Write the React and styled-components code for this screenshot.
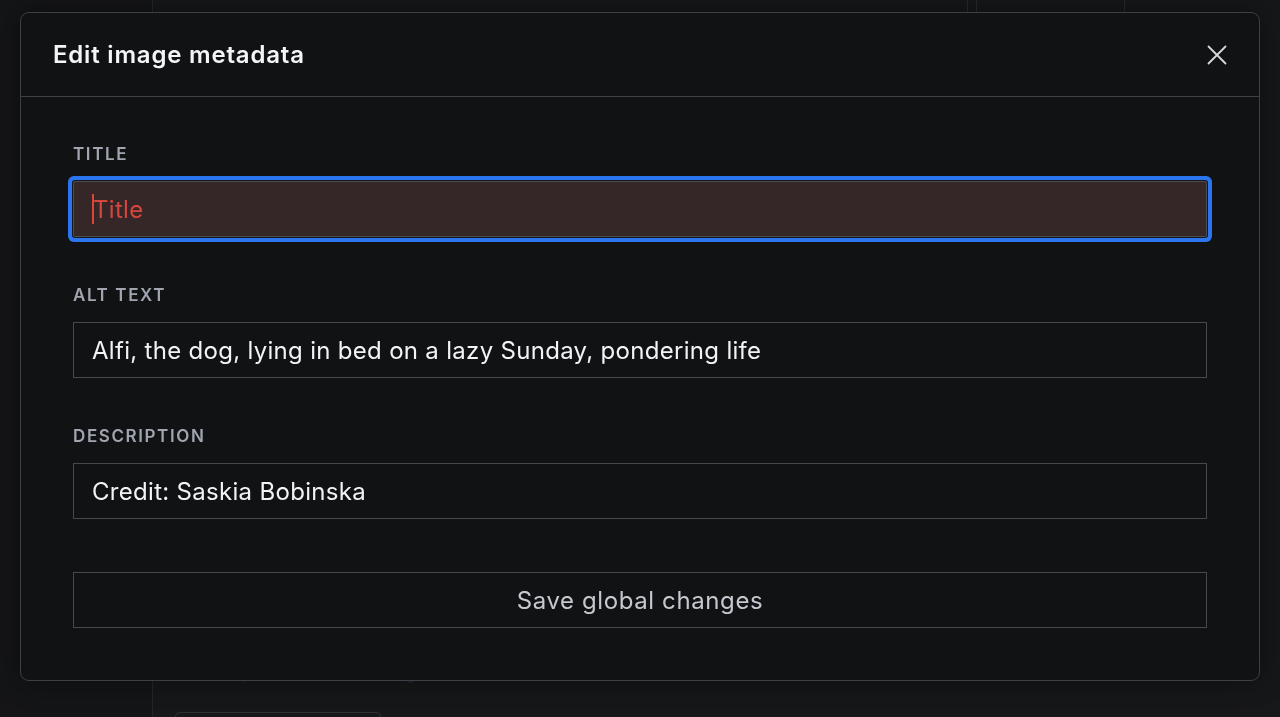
import React from "react";
import styled, { createGlobalStyle } from "styled-components";

const GlobalStyle = createGlobalStyle`
  * { box-sizing: border-box; }
  html, body { margin: 0; padding: 0; height: 100%; }
  body {
    background: #1b1c1f;
    font-family: Inter, "Noto Sans", "Liberation Sans", sans-serif;
    overflow: hidden;
  }
  #root { height: 100%; }
`;

// PAGE BEHIND THE DIALOG

const Page = styled.div`
  display: grid;
  grid-template-columns: 153px 1fr;
  height: 717px;
  background: #1b1c1f;
`;

const Sidebar = styled.aside`
  background: #18191c;
  border-right: 1px solid #2e3035;
`;

const Main = styled.main`
  display: flex;
  flex-direction: column;
  justify-content: space-between;
`;

const TopBar = styled.div`
  display: flex;
  height: 40px;
`;

const TopCell = styled.div`
  width: ${props => props.width}px;
  border-right: ${props => (props.bordered ? "1px solid #33353b" : "none")};
  border-left: ${props => (props.left ? "1px solid #33353b" : "none")};
`;

const BottomArea = styled.div`
  padding-left: 22px;
  display: flex;
  flex-direction: column;
  gap: 31px;
`;

const FaintText = styled.p`
  margin: 0;
  line-height: 22px;
  color: #2e3035;
  font-size: 22px;
`;

const FaintBox = styled.div`
  width: 206px;
  height: 5px;
  border: 1px solid #3a3c42;
  border-bottom: none;
  border-radius: 6px 6px 0 0;
`;

// DIALOG

const Overlay = styled.div`
  position: fixed;
  inset: 0;
  display: flex;
  justify-content: center;
  align-items: flex-start;
  padding-top: 12px;
  background: rgba(10, 10, 12, 0.25);
`;

const Dialog = styled.div`
  width: 1240px;
  background: #111214;
  border: 1px solid #3d4047;
  border-radius: 9px;
  box-shadow: 0 0 28px rgba(0, 0, 0, 0.45);
`;

const Header = styled.header`
  display: flex;
  align-items: center;
  justify-content: space-between;
  height: 84px;
  padding: 0 26px 0 32px;
  border-bottom: 1px solid #3d4047;
`;

const Heading = styled.h2`
  margin: 0;
  font-size: 24px;
  font-weight: 600;
  letter-spacing: 0.8px;
  color: #f4f5f7;
`;

const CloseButton = styled.button`
  display: flex;
  align-items: center;
  justify-content: center;
  width: 32px;
  height: 32px;
  padding: 0;
  background: none;
  border: none;
  color: #d6d8dc;
`;

const Body = styled.div`
  display: flex;
  flex-direction: column;
  padding: 47px 52px 52px;
`;

const Field = styled.div`
  display: flex;
  flex-direction: column;
  gap: 17px;
  margin-bottom: 48px;
`;

const Label = styled.label`
  font-size: 17px;
  line-height: 20px;
  font-weight: 600;
  letter-spacing: 1.6px;
  text-transform: uppercase;
  color: #a0a5af;
`;

const InputBox = styled.div`
  display: flex;
  align-items: center;
  height: 56px;
  padding: 0 18px;
  border: 1px solid ${props => (props.invalid ? "#4c4d53" : "#46484e")};
  background: ${props => (props.invalid ? "#352627" : "#111214")};
  border-radius: ${props => (props.focused ? "2px" : "0")};
  box-shadow: ${props =>
    props.focused ? "0 0 0 1px #16171a, 0 0 0 5px #2b76ee" : "none"};
`;

const Caret = styled.span`
  width: 2px;
  height: 30px;
  margin-right: -1px;
  background: #d9463c;
`;

const TextInput = styled.input`
  flex: 1;
  min-width: 0;
  padding: 0;
  border: none;
  outline: none;
  background: transparent;
  font-family: inherit;
  font-size: 24px;
  letter-spacing: 0.3px;
  color: #f2f3f5;

  &::placeholder {
    color: ${props => (props.invalid ? "#d4473d" : "#6b6e75")};
    opacity: 1;
  }
`;

const SaveButton = styled.button`
  margin-top: 5px;
  height: 56px;
  border: 1px solid #46484e;
  background: transparent;
  font-family: inherit;
  font-size: 24px;
  letter-spacing: 0.6px;
  color: #c5c8cf;
`;

const CloseIcon = () => (
  <svg width="22" height="22" viewBox="0 0 22 22" fill="none">
    <path
      d="M2.5 2.5L19.5 19.5M19.5 2.5L2.5 19.5"
      stroke="currentColor"
      strokeWidth="1.8"
      strokeLinecap="round"
    />
  </svg>
);

const fields = [
  { id: "alt", label: "Alt text", value: "Alfi, the dog, lying in bed on a lazy Sunday, pondering life" },
  { id: "description", label: "Description", value: "Credit: Saskia Bobinska" },
];

const App = () => {
  return (
    <>
      <GlobalStyle />
      <Page>
        <Sidebar />
        <Main>
          <TopBar>
            <TopCell width={815} bordered />
            <TopCell width={8} />
            <TopCell width={149} left bordered />
          </TopBar>
          <BottomArea>
            <FaintText>Description of the image</FaintText>
            <FaintBox />
          </BottomArea>
        </Main>
      </Page>

      <Overlay>
        <Dialog role="dialog" aria-label="Edit image metadata">
          <Header>
            <Heading>Edit image metadata</Heading>
            <CloseButton aria-label="Close">
              <CloseIcon />
            </CloseButton>
          </Header>
          <Body>
            <Field>
              <Label htmlFor="title">Title</Label>
              <InputBox invalid focused>
                <Caret />
                <TextInput id="title" placeholder="Title" invalid />
              </InputBox>
            </Field>
            {fields.map(field => (
              <Field key={field.id}>
                <Label htmlFor={field.id}>{field.label}</Label>
                <InputBox>
                  <TextInput id={field.id} defaultValue={field.value} />
                </InputBox>
              </Field>
            ))}
            <SaveButton>Save global changes</SaveButton>
          </Body>
        </Dialog>
      </Overlay>
    </>
  );
};

export default App;
